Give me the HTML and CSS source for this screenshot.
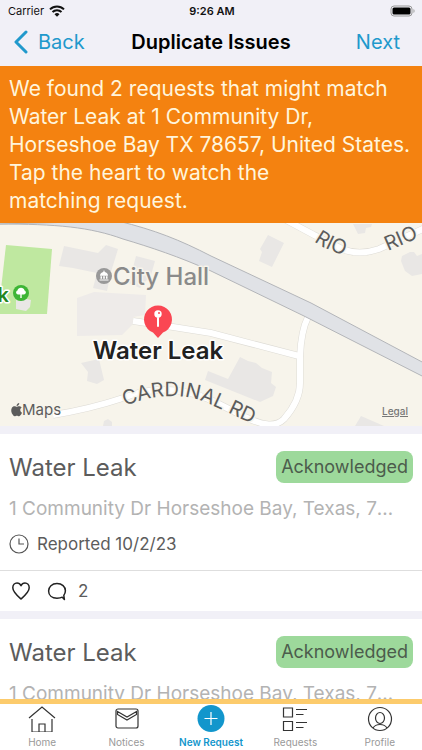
FILE: index.html
```html
<!DOCTYPE html>
<html lang="en">
<head>
    <meta charset="UTF-8">
    <meta name="viewport" content="width=device-width, initial-scale=1.0">
    <title>Duplicate Issues</title>
    <link rel="stylesheet" href="styles.css">
</head>
<body>

<div class="status-bar">
    <div class="carrier">
        <span>Carrier</span>
        <svg class="wifi" viewBox="0 0 16 12" width="16" height="12" aria-hidden="true">
            <path d="M1 4.4a10 10 0 0 1 14 0" />
            <path d="M3.5 7a6.4 6.4 0 0 1 9 0" />
            <path class="dot" d="M8 11.8 5.5 9.2a3.6 3.6 0 0 1 5 0z" />
        </svg>
    </div>
    <div class="clock">9:26 AM</div>
    <svg class="battery" viewBox="0 0 26 12" width="26" height="12" aria-hidden="true">
        <rect class="battery-case" x="1" y="1" width="21" height="10" rx="3" />
        <rect x="2.5" y="2.5" width="18" height="7" rx="1.5" />
        <path class="battery-tip" d="M23.5 4v4c1.4-.5 1.4-3.500 0-4z" />
    </svg>
</div>

<header class="nav-bar">
    <button class="nav-button back">
        <svg viewBox="0 0 14 24" width="14" height="24" aria-hidden="true"><path d="M12 2 2 12l10 10" /></svg>
        Back
    </button>
    <h1>Duplicate Issues</h1>
    <button class="nav-button next">Next</button>
</header>

<p class="notice">We found 2 requests that might match Water Leak at 1 Community Dr, Horseshoe Bay TX 78657, United States. Tap the heart to watch the matching&nbsp;request.</p>

<main class="content">
    <section class="map">
        <svg class="map-canvas" viewBox="0 0 422 203">
            <defs>
                <path id="cardinal" d="M125 183C152 172 182 169 207 180S238 195 262 205" />
                <path id="rio-west" d="M314 18Q328 29 354 35" />
                <path id="rio-east" d="M388 28L432 9" />
            </defs>

            <!-- park -->
            <path class="park" d="M6 22 52 26 47 91H0V75z" />

            <!-- buildings -->
            <path class="building" d="M64 23 98 30 106 22 118 26 111 49 107 68 93 65 97 50 73 45 59 43z" />
            <path class="building" d="M136 33 155 38 151 52 140 65 129 60z" />
            <path class="building pale" d="M77 75 94 69 146 72 145 92 133 94 133 101 122 112 77 113z" />
            <path class="building" d="M81 140 99 136 104 157 97 161 87 158 88 149z" />
            <path class="building" d="M16 77 21 78 22 75 31 77 30 84 26 88 16 86z" />
            <path class="building" d="M268 12 284 20 272 44 259 38 262 29 260 26z" />
            <path class="building" d="M353 1 372 1 371 4 366 5 365 10 358 11z" />
            <path class="building" d="M402 33 410 29 414 29 417 33 422 31V51L412 53 405 48 401 38z" />
            <path class="building" d="M240 134 248 138 256 140 262 145 272 149 271 160 276 164 273 173 260 179 205 157 208 148 228 156z" />
            <path class="building" d="M361 193 384 203H355z" />
            <path class="building" d="M104 198 108 196 112 199V203H103z" />

            <!-- streets -->
            <g class="street-edge">
                <path d="M286-3 314 12 342 26Q359 33 379 26L425 5" />
                <path d="M133 98 173 104 211 110 299 133" />
                <path d="M53 192Q90 186 123 175C160 160 190 168 211 177L245 194C264 203 276 204 284 196Q300 178 300 160L300 134Q301 108 308 94" />
            </g>
            <g class="street">
                <path d="M286-3 314 12 342 26Q359 33 379 26L425 5" />
                <path d="M133 98 173 104 211 110 299 133" />
                <path d="M53 192Q90 186 123 175C160 160 190 168 211 177L245 194C264 203 276 204 284 196Q300 178 300 160L300 134Q301 108 308 94" />
            </g>
            <path class="highway" d="M-2 1C57 1 90 4 123 16 150 24 180 34 211 48L304 93 424 154V140L311 80 211 33C180 17 155 7 118-2z" />

            <!-- places -->
            <circle class="park-dot" cx="21" cy="70" r="8" />
            <path class="glyph" d="M20.300 75v-3.500c-5 .8-5-3.500-2.800-4.100.5-3.600 6.500-3.600 7 0 2.200.6 2.200 4.900-2.800 4.100V75z" />
            <text class="park-label" x="9" y="79">k</text>
            <circle class="hall-dot" cx="104" cy="53" r="8" />
            <path class="glyph" d="M99.500 57.500h9v-1h-9zM100.500 55.800h1.500v-2.500h-1.500zM103.200 55.800h1.600v-2.500h-1.600zM106 55.800h1.500v-2.500H106zM100 52.700h8c0-2-1.500-3.300-3.200-3.700L104 47l-.8 2c-1.700.4-3.200 1.700-3.200 3.700z" />
            <text class="hall-label" x="113" y="62">City Hall</text>

            <text class="street-label"><textPath href="#cardinal">CARDINAL RD</textPath></text>
            <text class="street-label"><textPath href="#rio-west">RIO</textPath></text>
            <text class="street-label"><textPath href="#rio-east">RIO</textPath></text>

            <!-- issue pin -->
            <path class="pin" d="M158 115 153 109.500A14 14 0 1 1 163 109.500z" />
            <path class="pin-needle" d="M158 95v8" />
            <circle class="glyph" cx="158" cy="91" r="3.700" />
            <circle class="pin-hole" cx="159" cy="90" r="1" />
            <text class="pin-label" x="158" y="136">Water Leak</text>

            <!-- attribution -->
            <path class="apple" transform="translate(10 180) scale(.55)" d="M12.152 6.896c-.948 0-2.415-1.078-3.960-1.040-2.040.027-3.910 1.183-4.961 3.014-2.117 3.675-.546 9.103 1.519 12.090 1.013 1.454 2.208 3.090 3.792 3.039 1.520-.065 2.090-.987 3.935-.987 1.831 0 2.350.987 3.960.948 1.637-.026 2.676-1.480 3.676-2.948 1.156-1.688 1.636-3.325 1.662-3.415-.039-.013-3.182-1.221-3.220-4.857-.026-3.040 2.480-4.494 2.597-4.559-1.429-2.090-3.623-2.324-4.390-2.376-2-.156-3.675 1.090-4.610 1.090zM15.530 3.830c.843-1.012 1.400-2.427 1.245-3.830-1.207.052-2.662.805-3.532 1.818-.780.896-1.454 2.338-1.273 3.714 1.338.104 2.715-.688 3.559-1.701z" />
            <text class="maps-label" x="22" y="192">Maps</text>
        </svg>
        <a class="legal" href="#legal">Legal</a>
    </section>

    <article class="card">
        <div class="card-body">
            <div class="card-top">
                <h2>Water Leak</h2>
                <span class="badge">Acknowledged</span>
            </div>
            <p class="address">1 Community Dr Horseshoe Bay, Texas, 78657, United States</p>
            <p class="reported">
                <svg viewBox="0 0 20 20" width="20" height="20" aria-hidden="true"><circle cx="10" cy="10" r="9" /><path d="M10 4.500V10h5" /></svg>
                Reported 10/2/23
            </p>
        </div>
        <div class="card-actions">
            <button aria-label="Watch"><svg viewBox="0 0 20 20" width="20" height="20"><path d="M10 18C6 14.500 1.800 11 1.800 6.800 1.800 4 3.700 2 6 2c1.800 0 3.200 1 4 2.700C10.800 3 12.200 2 14 2c2.300 0 4.200 2 4.200 4.800C18.200 11 14 14.500 10 18z" /></svg></button>
            <button aria-label="Comments"><svg viewBox="0 0 20 20" width="20" height="20"><path d="M15.300 16.200C13.800 17 12.200 17.200 10 17.200c-5 0-8.400-2.900-8.400-7.200S5 2.600 10 2.600s8.400 3 8.400 7.200c0 1.800-.6 3.300-1.600 4.600l.6 4.100z" /></svg>2</button>
        </div>
    </article>

    <article class="card">
        <div class="card-body">
            <div class="card-top">
                <h2>Water Leak</h2>
                <span class="badge">Acknowledged</span>
            </div>
            <p class="address">1 Community Dr Horseshoe Bay, Texas, 78657, United States</p>
        </div>
    </article>
</main>

<nav class="tab-bar">
    <a href="#home">
        <svg viewBox="0 0 28 28" width="28" height="28" aria-hidden="true"><path d="M1 14 14 3l13 11M4 15v13h20V15M11 28v-8h6v8" /></svg>
        Home
    </a>
    <a href="#notices">
        <svg viewBox="0 0 28 28" width="28" height="28" aria-hidden="true"><rect x="3" y="5" width="22" height="19" rx="2" /><path d="M4.500 7.500 14 13l9.500-5.500v3L14 16 4.500 10.500z" /></svg>
        Notices
    </a>
    <a class="active" href="#new">
        <svg viewBox="0 0 28 28" width="28" height="28" aria-hidden="true"><circle cx="14" cy="14.500" r="13.500" /><path d="M14 8v13M7.500 14.500h13" /></svg>
        New Request
    </a>
    <a href="#requests">
        <svg viewBox="0 0 28 28" width="28" height="28" aria-hidden="true"><path d="M2.500 4h9v9h-9zM2.500 17.500h9v9h-9zM15 5.500h11M15 10.500h7.500M15 18.500h11M15 23.500h7.500" /></svg>
        Requests
    </a>
    <a href="#profile">
        <svg viewBox="0 0 28 28" width="28" height="28" aria-hidden="true"><circle cx="14" cy="15" r="11.500" /><ellipse cx="14" cy="14" rx="4.500" ry="5.500" /><path d="M7 24c1.500-2.500 4-3.500 7-3.500s5.500 1 7 3.500" /></svg>
        Profile
    </a>
</nav>

</body>
</html>
```
FILE: styles.css
```css
* {
    box-sizing: border-box;
}

body {
    font-family: Inter, "Liberation Sans", sans-serif;
    background-color: #f1f0f7;
    color: #5c5c5c;
    margin: 0;
    height: 100vh;
    display: flex;
    flex-direction: column;
}

h1, h2, p {
    margin: 0;
    font-weight: 400;
}

button {
    font: inherit;
    color: inherit;
    background: none;
    border: none;
    padding: 0;
    cursor: pointer;
}

svg {
    display: block;
    flex-shrink: 0;
}

.status-bar {
    display: grid;
    grid-template-columns: 1fr auto 1fr;
    align-items: center;
    height: 22px;
    padding: 0 6px 0 8px;
    font-size: 11px;
    color: #111;
}

.carrier {
    display: flex;
    align-items: center;
    gap: 5px;
}

.wifi {
    fill: none;
    stroke: #111;
    stroke-width: 2;
}

.wifi .dot {
    fill: #111;
    stroke: none;
}

.clock {
    font-weight: 600;
}

.battery {
    justify-self: end;
}

.battery-case {
    fill: none;
    stroke: #999;
}

.battery-tip {
    fill: #999;
}

.nav-bar {
    display: grid;
    grid-template-columns: 1fr auto 1fr;
    align-items: center;
    height: 44px;
    padding: 0 14px 4px;
}

.nav-bar h1 {
    font-size: 20px;
    font-weight: 600;
    color: #000;
}

.nav-button {
    display: flex;
    align-items: center;
    gap: 10px;
    font-size: 20px;
    color: #2199cc;
}

.nav-button svg {
    fill: none;
    stroke: #2199cc;
    stroke-width: 3;
    stroke-linecap: round;
    stroke-linejoin: round;
}

.next {
    justify-self: end;
    padding-right: 8px;
}

.notice {
    padding: 9px 9px 8px;
    background-color: #f48210;
    color: #fff5dc;
    font-size: 21px;
    line-height: 28px;
}

.content {
    flex: 1;
    min-height: 0;
    overflow-y: auto;
    scrollbar-width: none;
}

/* map */

.map {
    position: relative;
    background-color: #f7f4eb;
}

.map-canvas {
    width: 100%;
    height: auto;
    overflow: hidden;
}

.park {
    fill: #bfe8a0;
}

.building {
    fill: #e9e7e5;
}

.building.pale {
    fill: #eeebe9;
}

.street, .street-edge {
    fill: none;
    stroke: #fff;
    stroke-width: 6;
}

.street-edge {
    stroke: #dddbd5;
    stroke-width: 7;
}

.highway {
    fill: #e0e2e6;
    stroke: #b3b5b9;
}

.park-dot {
    fill: #3db535;
}

.hall-dot {
    fill: #999;
}

.glyph {
    fill: #fff;
}

.park-label, .hall-label, .pin-label, .street-label {
    stroke: #fff;
    stroke-width: 3;
    stroke-linejoin: round;
    paint-order: stroke;
}

.park-label {
    fill: #23861f;
    font-size: 20px;
    font-weight: 600;
    text-anchor: end;
}

.hall-label {
    fill: #8a8a8a;
    stroke: #f7f4eb;
    font-size: 24px;
    font-weight: 500;
}

.pin-label {
    fill: #222;
    font-size: 24px;
    font-weight: 600;
    text-anchor: middle;
}

.street-label {
    fill: #5c5c5c;
    stroke: #f7f4eb;
    font-size: 20px;
}

.pin {
    fill: #fa4753;
}

.pin-needle {
    stroke: #fff;
    stroke-width: 2;
    stroke-linecap: round;
}

.pin-hole {
    fill: #fa4753;
}

.apple, .maps-label {
    fill: #5c5c5c;
}

.maps-label {
    font-size: 15px;
}

.legal {
    position: absolute;
    right: 14px;
    bottom: 9px;
    font-size: 10px;
    font-weight: 500;
    color: #777;
}

/* request cards */

.card {
    margin-top: 8px;
    background-color: #fff;
}

.card-body {
    padding: 17px 9px 14px;
}

.card-top {
    display: flex;
    justify-content: space-between;
    align-items: center;
}

.card-top h2 {
    font-size: 24px;
}

.badge {
    padding: 0 5px;
    border-radius: 8px;
    background-color: #9dd99b;
    color: #4c5c4c;
    font-size: 18px;
    line-height: 32px;
}

.address {
    margin-top: 12px;
    padding-right: 12px;
    font-size: 19px;
    line-height: 28px;
    color: #b3b3b3;
    white-space: nowrap;
    overflow: hidden;
    text-overflow: ellipsis;
}

.reported {
    display: flex;
    align-items: center;
    gap: 8px;
    margin-top: 9px;
    font-size: 17px;
    line-height: 24px;
}

.reported svg {
    fill: none;
    stroke: #555;
    stroke-width: 1.2;
}

.card-actions {
    display: flex;
    align-items: center;
    gap: 16px;
    height: 41px;
    padding: 0 11px;
    border-top: 1px solid #dedede;
    font-size: 17px;
}

.card-actions button {
    display: flex;
    align-items: center;
    gap: 11px;
}

.card-actions svg {
    fill: none;
    stroke: #222;
    stroke-width: 1.5;
    stroke-linejoin: round;
}

/* tab bar */

.tab-bar {
    display: grid;
    grid-template-columns: repeat(5, 1fr);
    height: 51px;
    border-top: 5px solid #fccb6c;
    background-color: #fff;
}

.tab-bar a {
    display: flex;
    flex-direction: column;
    align-items: center;
    font-size: 10px;
    line-height: 20px;
    color: #999;
    text-decoration: none;
}

.tab-bar svg {
    fill: none;
    stroke: #333;
    stroke-width: 1.2;
}

.tab-bar .active {
    color: #1296cc;
    font-weight: 600;
}

.tab-bar .active svg {
    fill: #1296cc;
    stroke: #fff;
}

.tab-bar .active circle {
    stroke: none;
}
```
